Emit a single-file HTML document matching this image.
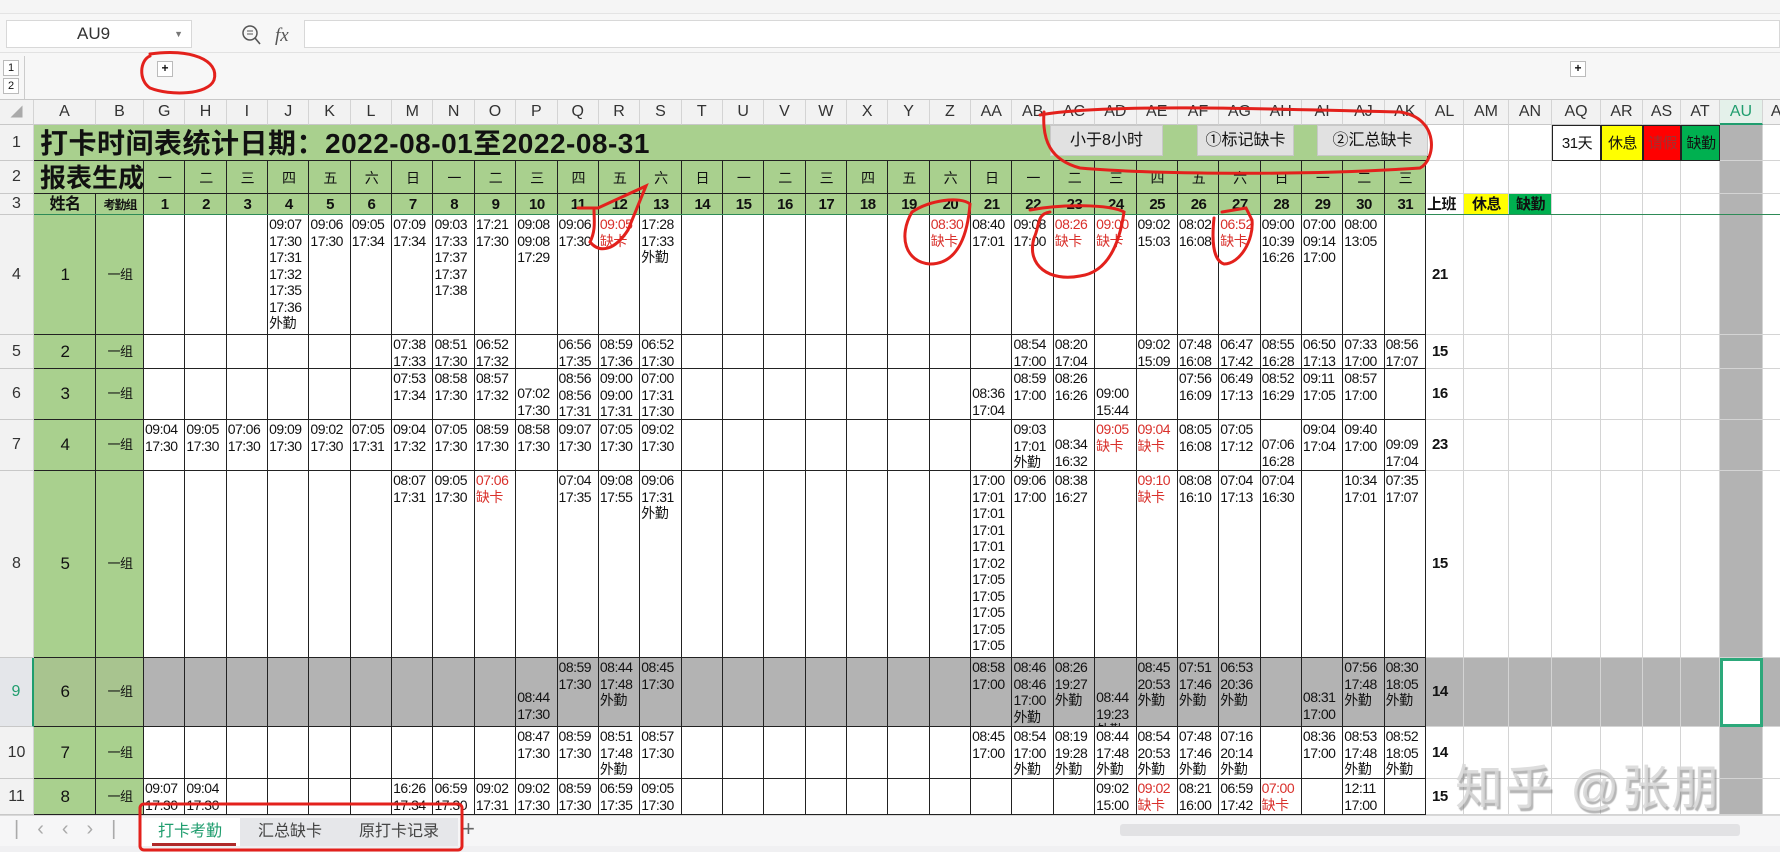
<!DOCTYPE html>
<html><head><meta charset="utf-8">
<style>
*{margin:0;padding:0;box-sizing:border-box}
html,body{width:1780px;height:852px;overflow:hidden}
body{background:#fff;font-family:"Liberation Sans","Noto Sans CJK SC",sans-serif;position:relative;color:#111}
.a{position:absolute}
.c{position:absolute;overflow:hidden;white-space:nowrap;font-size:14px;line-height:16.5px;letter-spacing:-0.5px;padding-left:1px;padding-top:1px}
.h{position:absolute;text-align:center;font-size:16px;color:#333;background:#f2f2f2;border-right:1px solid #d4d4d4;border-bottom:1px solid #c8c8c8}
.btn{position:absolute;background:#e1e1e1;border:1px solid #c8c8c8;font-size:16px;text-align:center;line-height:30px;font-family:"Liberation Sans","Noto Sans CJK SC",sans-serif}
</style></head><body>
<div class="a" style="left:0;top:0;width:1780px;height:14px;background:#f5f5f5;border-bottom:1px solid #e4e4e4"></div>
<div class="a" style="left:0;top:14px;width:1780px;height:86px;background:#f7f7f7"></div>
<div class="a" style="left:6px;top:20px;width:186px;height:28px;background:#fff;border:1px solid #d8d8d8;font-size:17px;color:#333;line-height:26px;padding-left:70px">AU9<span style="position:absolute;right:8px;font-size:9px;color:#777">▼</span></div>
<svg class="a" style="left:240px;top:22px" width="60" height="26"><circle cx="10" cy="11" r="7" fill="none" stroke="#555" stroke-width="1.5"/><line x1="15" y1="16" x2="20" y2="22" stroke="#555" stroke-width="1.6"/><line x1="7" y1="9" x2="13" y2="9" stroke="#555"/><line x1="7" y1="12" x2="13" y2="12" stroke="#555"/><text x="35" y="19" font-size="19" font-style="italic" fill="#555" font-family="Liberation Serif">fx</text></svg>
<div class="a" style="left:304px;top:20px;width:1476px;height:28px;background:#fff;border:1px solid #d8d8d8"></div>
<div class="a" style="left:0;top:52px;width:1780px;height:1px;background:#e2e2e2"></div>
<div class="a" style="left:3px;top:60px;width:16px;height:16px;border:1px solid #bbb;background:#fff;font-size:11px;text-align:center;line-height:14px">1</div>
<div class="a" style="left:3px;top:78px;width:16px;height:16px;border:1px solid #bbb;background:#fff;font-size:11px;text-align:center;line-height:14px">2</div>
<div class="a" style="left:24px;top:56px;width:1px;height:44px;background:#ccc"></div>
<div class="a" style="left:157px;top:61px;width:16px;height:16px;border:1px solid #bbb;background:#fff;font-size:12px;font-weight:bold;text-align:center;line-height:13px">+</div>
<div class="a" style="left:1570px;top:61px;width:16px;height:16px;border:1px solid #bbb;background:#fff;font-size:12px;font-weight:bold;text-align:center;line-height:13px">+</div>
<div class="a" style="left:0;top:99px;width:1780px;height:1px;background:#c8c8c8"></div>
<div id="g"></div>
<div class="btn" style="left:1050px;top:125px;width:113px;height:31px">小于8小时</div>
<div class="btn" style="left:1197px;top:125px;width:97px;height:31px">①标记缺卡</div>
<div class="btn" style="left:1317px;top:125px;width:111px;height:31px">②汇总缺卡</div>
<div class="a" style="left:0;top:815px;width:1780px;height:37px;background:#f0f0f2;border-top:1px solid #d8d8d8"></div>
<div class="a" style="left:0;top:816px;width:1780px;height:30px;background:#f6f6f7"></div>
<div class="a" style="left:14px;top:818px;font-size:20px;color:#aaa;letter-spacing:18px">|‹‹›|</div>
<div class="a" style="left:140px;top:818px;width:100px;height:28px;background:#fff;font-size:16px;color:#1f9d6e;text-align:center;line-height:28px">打卡考勤</div>
<div class="a" style="left:152px;top:843px;width:84px;height:3px;background:#b02a2a"></div>
<div class="a" style="left:240px;top:818px;width:100px;height:28px;background:#e6e7ea;font-size:16px;color:#444;text-align:center;line-height:28px">汇总缺卡</div>
<div class="a" style="left:340px;top:818px;width:118px;height:28px;background:#e6e7ea;font-size:16px;color:#444;text-align:center;line-height:28px">原打卡记录</div>
<div class="a" style="left:462px;top:816px;font-size:22px;color:#666">+</div>
<div class="a" style="left:1120px;top:824px;width:620px;height:12px;background:#e2e2e4;border-radius:3px"></div>
<div class="a" style="left:1455px;top:748px;font-size:48px;color:rgba(215,215,215,0.85);text-shadow:2px 3px 1px rgba(120,120,120,0.55);letter-spacing:2px">知乎 @张朋</div>
<svg class="a" style="left:0;top:0" width="1780" height="852" fill="none" stroke="#e3211c" stroke-width="3" stroke-linecap="round">
<path d="M150 54 C190 48 220 60 214 80 C208 95 170 96 150 88 C138 80 140 60 150 56"/>
<path d="M1040 115 C1100 104 1250 108 1400 112 C1440 118 1436 160 1420 168 C1300 176 1150 174 1080 168 C1050 160 1042 140 1044 112"/>
<path d="M578 208 L598 208 L646 186 L628 230 C615 250 600 254 590 242 C596 230 594 220 594 210"/>
<path d="M912 212 C930 200 960 196 970 204 C968 230 960 264 930 264 C905 262 898 236 912 212"/>
<path d="M1030 210 C1060 204 1110 204 1124 212 C1120 240 1110 272 1080 276 C1050 282 1026 266 1034 238 C1040 226 1036 214 1050 212"/>
<path d="M1222 212 L1246 208 L1252 220 C1254 240 1240 264 1224 264 C1212 260 1212 238 1214 218"/>
<rect x="140" y="804" width="322" height="46" rx="4"/>
</svg>
<script>
const D=[144];for(let i=0;i<31;i++)D.push(144+(i+1)*(1282/31));
const X=[0,34,96].concat(D).concat([1464,1509,1552,1601,1643,1681,1720,1763,1800]);
const L=["","A","B","G","H","I","J","K","L","M","N","O","P","Q","R","S","T","U","V","W","X","Y","Z","AA","AB","AC","AD","AE","AF","AG","AH","AI","AJ","AK","AL","AM","AN","AQ","AR","AS","AT","AU","AV"];
const Y=[100,125,161,194,215,335,369,420,471,658,727,779,815];
const g=document.getElementById('g');let h='';
function box(x,y,w,hh,st,txt,cls){h+=`<div class="${cls||'c'}" style="left:${x}px;top:${y}px;width:${w}px;height:${hh}px;${st}">${txt||''}</div>`}
for(let c=1;c<L.length;c++){box(X[c],100,X[c+1]-X[c],25,'line-height:24px;'+(c==41?'color:#1f9d6e;border-bottom:2px solid #1f9d6e;background:#e4f1ea':''),L[c],'h')}
box(0,100,34,25,'color:#aaa;font-size:12px;line-height:24px','◢','h');
for(let r=1;r<=11;r++){box(0,Y[r],34,Y[r+1]-Y[r],'font-size:16px;display:flex;align-items:center;justify-content:center;'+(r==9?'color:#1f9d6e;background:#e4e6ea;border-right:2px solid #1f9d6e':''),String(r),'h')}
const wd=["一","二","三","四","五","六","日"];
const data={
4:{4:"09:07 17:30 17:31 17:32 17:35 17:36 外勤",5:"09:06 17:30",6:"09:05 17:34",7:"07:09 17:34",8:"09:03 17:33 17:37 17:37 17:38",9:"17:21 17:30",10:"09:08 09:08 17:29",11:"09:06 17:30",12:"!09:05 缺卡",13:"17:28 17:33 外勤",20:"!08:30 缺卡",21:"08:40 17:01",22:"09:08 17:00",23:"!08:26 缺卡",24:"!09:00 缺卡",25:"09:02 15:03",26:"08:02 16:08",27:"!06:52 缺卡",28:"09:00 10:39 16:26",29:"07:00 09:14 17:00",30:"08:00 13:05"},
5:{7:"07:38 17:33",8:"08:51 17:30",9:"06:52 17:32",11:"06:56 17:35",12:"08:59 17:36",13:"06:52 17:30",22:"08:54 17:00",23:"08:20 17:04",25:"09:02 15:09",26:"07:48 16:08",27:"06:47 17:42",28:"08:55 16:28",29:"06:50 17:13",30:"07:33 17:00",31:"08:56 17:07"},
6:{7:"07:53 17:34",8:"08:58 17:30",9:"08:57 17:32",10:"^07:02 17:30",11:"08:56 08:56 17:31",12:"09:00 09:00 17:31",13:"07:00 17:31 17:30",21:"^08:36 17:04",22:"08:59 17:00",23:"08:26 16:26",24:"^09:00 15:44",26:"07:56 16:09",27:"06:49 17:13",28:"08:52 16:29",29:"09:11 17:05",30:"08:57 17:00"},
7:{1:"09:04 17:30",2:"09:05 17:30",3:"07:06 17:30",4:"09:09 17:30",5:"09:02 17:30",6:"07:05 17:31",7:"09:04 17:32",8:"07:05 17:30",9:"08:59 17:30",10:"08:58 17:30",11:"09:07 17:30",12:"07:05 17:30",13:"09:02 17:30",22:"09:03 17:01 外勤",23:"^08:34 16:32",24:"!09:05 缺卡",25:"!09:04 缺卡",26:"08:05 16:08",27:"07:05 17:12",28:"^07:06 16:28",29:"09:04 17:04",30:"09:40 17:00",31:"^09:09 17:04"},
8:{7:"08:07 17:31",8:"09:05 17:30",9:"!07:06 缺卡",11:"07:04 17:35",12:"09:08 17:55",13:"09:06 17:31 外勤",21:"17:00 17:01 17:01 17:01 17:01 17:02 17:05 17:05 17:05 17:05 17:05",22:"09:06 17:00",23:"08:38 16:27",25:"!09:10 缺卡",26:"08:08 16:10",27:"07:04 17:13",28:"07:04 16:30",30:"10:34 17:01",31:"07:35 17:07"},
9:{10:"^^08:44 17:30",11:"08:59 17:30",12:"08:44 17:48 外勤",13:"08:45 17:30",21:"08:58 17:00",22:"08:46 08:46 17:00 外勤",23:"08:26 19:27 外勤",24:"^^08:44 19:23 外勤",25:"08:45 20:53 外勤",26:"07:51 17:46 外勤",27:"06:53 20:36 外勤",29:"^^08:31 17:00",30:"07:56 17:48 外勤",31:"08:30 18:05 外勤"},
10:{10:"08:47 17:30",11:"08:59 17:30",12:"08:51 17:48 外勤",13:"08:57 17:30",21:"08:45 17:00",22:"08:54 17:00 外勤",23:"08:19 19:28 外勤",24:"08:44 17:48 外勤",25:"08:54 20:53 外勤",26:"07:48 17:46 外勤",27:"07:16 20:14 外勤",29:"08:36 17:00",30:"08:53 17:48 外勤",31:"08:52 18:05 外勤"},
11:{1:"09:07 17:30",2:"09:04 17:30",7:"16:26 17:34",8:"06:59 17:30",9:"09:02 17:31",10:"09:02 17:30",11:"08:59 17:30",12:"06:59 17:35",13:"09:05 17:30",24:"09:02 15:00",25:"!09:02 缺卡",26:"08:21 16:00",27:"06:59 17:42",28:"!07:00 缺卡",30:"12:11 17:00"}};
const al={4:21,5:15,6:16,7:23,8:15,9:14,10:14,11:15};
const G='#a9d08e',B='border-right:1px solid #222;border-bottom:1px solid #222;';
const LG='border-right:1px solid #d4d4d4;border-bottom:1px solid #d4d4d4;';
box(34,125,1428-34,36,'background:'+G+';border-bottom:1px solid #222;border-right:1px solid #222;font-size:28px;font-weight:bold;line-height:36px;padding-left:6px;letter-spacing:0.5px','打卡时间表统计日期：2022-08-01至2022-08-31');
box(34,161,110,33,'background:'+G+';'+B+'font-size:26px;font-weight:bold;line-height:33px;padding-left:6px;letter-spacing:0','报表生成');
box(34,194,62,21,'background:'+G+';'+B+'font-size:16px;font-weight:bold;text-align:center;line-height:20px','姓名');
box(96,194,48,21,'background:'+G+';'+B+'font-size:12px;font-weight:bold;text-align:center;line-height:20px;letter-spacing:-1px','考勤组');
for(let d=1;d<=31;d++){const c=d+2,x=X[c],w=X[c+1]-x;
 box(x,161,w,33,'background:'+G+';'+B+'text-align:center;line-height:32px;font-size:14px',wd[(d-1)%7]);
 box(x,194,w,21,'background:'+G+';'+B+'text-align:center;line-height:20px;font-size:15px;font-weight:bold',String(d));}
for(let c=34;c<=42;c++){for(let r=1;r<=3;r++){let st=LG,t='';const x=X[c],w=X[c+1]-x;
 if(c==41)st+='background:#b3b3b3;';
 if(r==1){if(c==37){st+='border:1px solid #222;text-align:center;font-size:15px;line-height:34px';t='31天'}
  if(c==38){st+='background:#ffff00;border:1px solid #222;text-align:center;font-size:15px;line-height:34px';t='休息'}
  if(c==39){st+='background:#ff0000;border:1px solid #222;color:#a03030;text-align:center;font-size:15px;line-height:34px';t='请假'}
  if(c==40){st+='background:#00b050;border:1px solid #222;text-align:center;font-size:15px;line-height:34px';t='缺勤'}}
 if(r==3){if(c==34){st+='font-size:15px;font-weight:bold;line-height:20px';t='上班'}
  if(c==35){st+='background:#ffff00;font-size:15px;font-weight:bold;line-height:20px;text-align:center';t='休息'}
  if(c==36){st+='background:#00b050;font-size:15px;font-weight:bold;line-height:20px;text-align:center';t='缺勤'}}
 box(x,Y[r],w,Y[r+1]-Y[r],st,t);}}
for(let r=4;r<=11;r++){const y=Y[r],hh=Y[r+1]-y,gray=r==9;
 box(34,y,62,hh,'background:'+(gray?'#a8c48f':G)+';'+B+'font-size:17px;display:flex;align-items:center;justify-content:center',String(r-3));
 box(96,y,48,hh,'background:'+(gray?'#a8c48f':G)+';'+B+'font-size:13px;display:flex;align-items:center;justify-content:center','一组');
 for(let d=1;d<=31;d++){const c=d+2,x=X[c],w=X[c+1]-x;let s=(data[r]||{})[d]||'';let st=B+(gray?'background:#b3b3b3;':'');
  let off=0;while(s[0]=='^'){off+=15;s=s.slice(1)}
  let red=false;if(s[0]=='!'){red=true;s=s.slice(1)}
  if(off)st+='padding-top:'+(off+1)+'px;';
  if(red)st+='color:#d9302b;';
  box(x,y,w,hh,st,s.split(' ').join('<br>'));}
 for(let c=34;c<=42;c++){const x=X[c],w=X[c+1]-x;let st=LG,t='';
  if(gray)st+='background:#b3b3b3;';
  if(c==41)st+='background:#b3b3b3;';
  if(c==34){st+='font-weight:bold;font-size:15px;display:flex;align-items:center;padding-left:6px';t=String(al[r])}
  if(c==41&&r==9)st='background:#fff;border:3px solid #2ca87a;';
  box(x,y,w,hh,st,t);}}
h+='<div class="a" style="left:34px;top:214px;width:1746px;height:1px;background:#2e8b57"></div>';
g.innerHTML=h;
</script>
</body></html>
